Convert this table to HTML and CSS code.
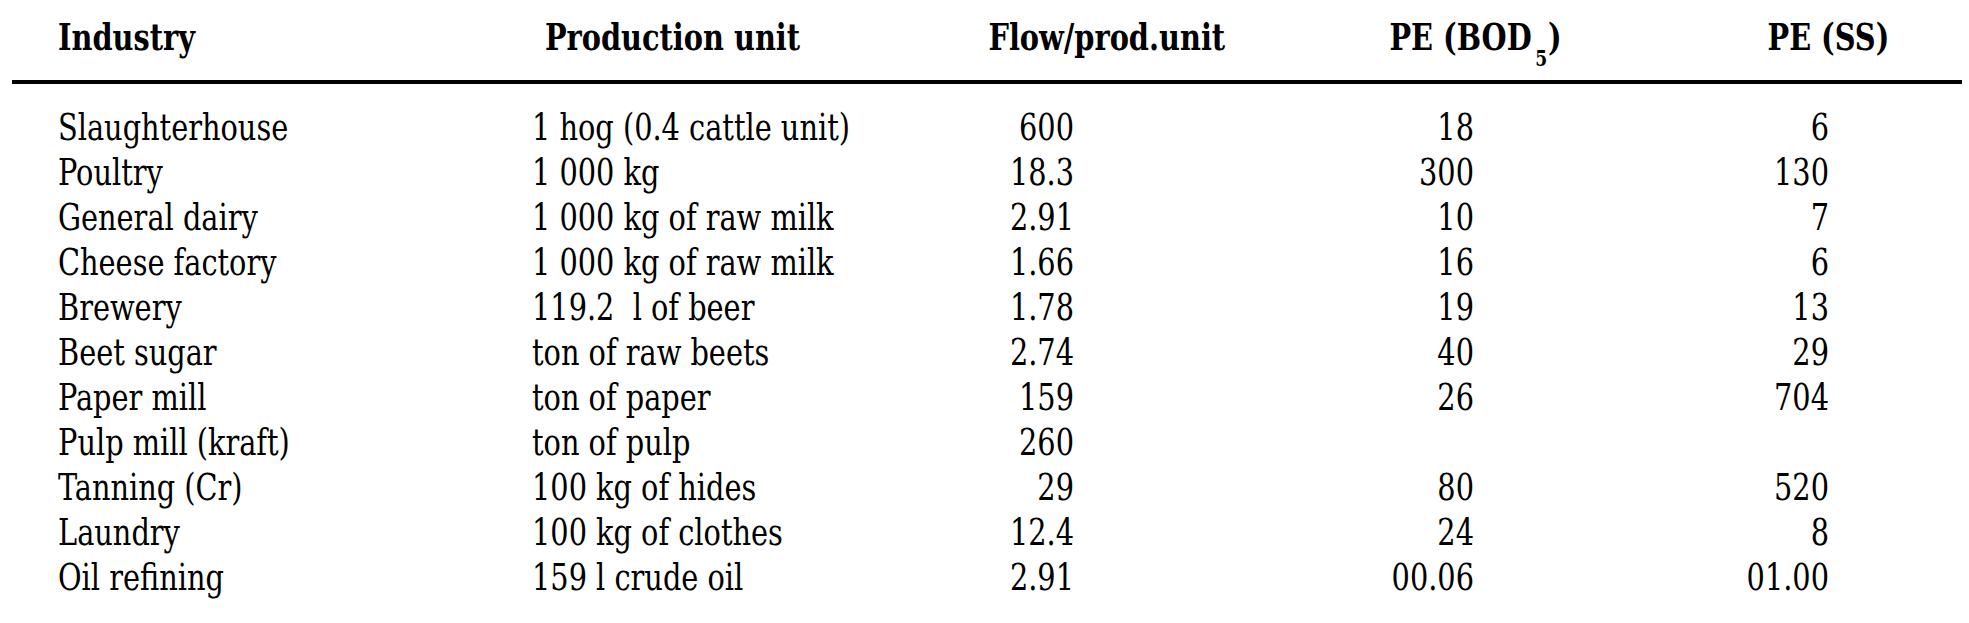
FILE: index.html
```html
<!DOCTYPE html>
<html lang="en">
<head>
<meta charset="utf-8">
<title>Industrial wastewater population equivalents</title>
<link rel="stylesheet" href="styles.css">
</head>
<body>
<div class="sheet">
  <div class="head">
    <div class="h h-ind"><span class="ht">Industry</span></div>
    <div class="h h-unit"><span class="ht">Production unit</span></div>
    <div class="h h-flow"><span class="ht">Flow/prod.unit</span></div>
    <div class="h h-bod"><span class="ht">PE (BOD<span class="sub">5</span>)</span></div>
    <div class="h h-ss"><span class="ht">PE (SS)</span></div>
  </div>
  <div class="rule"></div>
  <div class="rows">
    <div class="row"><span class="c c1">Slaughterhouse</span><span class="c c2">1 hog (0.4 cattle unit)</span><span class="c c3">600</span><span class="c c4">18</span><span class="c c5">6</span></div>
    <div class="row"><span class="c c1">Poultry</span><span class="c c2">1 000 kg</span><span class="c c3">18.3</span><span class="c c4">300</span><span class="c c5">130</span></div>
    <div class="row"><span class="c c1">General dairy</span><span class="c c2">1 000 kg of raw milk</span><span class="c c3">2.91</span><span class="c c4">10</span><span class="c c5">7</span></div>
    <div class="row"><span class="c c1">Cheese factory</span><span class="c c2">1 000 kg of raw milk</span><span class="c c3">1.66</span><span class="c c4">16</span><span class="c c5">6</span></div>
    <div class="row"><span class="c c1">Brewery</span><span class="c c2">119.2  l of beer</span><span class="c c3">1.78</span><span class="c c4">19</span><span class="c c5">13</span></div>
    <div class="row"><span class="c c1">Beet sugar</span><span class="c c2">ton of raw beets</span><span class="c c3">2.74</span><span class="c c4">40</span><span class="c c5">29</span></div>
    <div class="row"><span class="c c1">Paper mill</span><span class="c c2">ton of paper</span><span class="c c3">159</span><span class="c c4">26</span><span class="c c5">704</span></div>
    <div class="row"><span class="c c1">Pulp mill (kraft)</span><span class="c c2">ton of pulp</span><span class="c c3">260</span><span class="c c4"></span><span class="c c5"></span></div>
    <div class="row"><span class="c c1">Tanning (Cr)</span><span class="c c2">100 kg of hides</span><span class="c c3">29</span><span class="c c4">80</span><span class="c c5">520</span></div>
    <div class="row"><span class="c c1">Laundry</span><span class="c c2">100 kg of clothes</span><span class="c c3">12.4</span><span class="c c4">24</span><span class="c c5">8</span></div>
    <div class="row"><span class="c c1">Oil refining</span><span class="c c2">159 l crude oil</span><span class="c c3">2.91</span><span class="c c4">00.06</span><span class="c c5">01.00</span></div>
  </div>
</div>
</body>
</html>
```
FILE: styles.css
```css
html, body {
  margin: 0;
  padding: 0;
  background: #ffffff;
  overflow: hidden;
}

.sheet {
  padding-top: 15px;
  font-family: "DejaVu Serif Condensed", "DejaVu Serif", serif;
  font-size: 37px;
  line-height: 45px;
  color: #000000;
}

/* header row */
.head {
  display: grid;
  grid-template-columns: 426px 376px 493px 244px 131px 200px;
  padding-left: 58px;
  height: 45px;
  font-weight: bold;
}

.h {
  display: flex;
  justify-content: center;
}

.h-ind {
  justify-content: flex-start;
}

.h-ss {
  grid-column: 6;
}

.ht {
  display: inline-block;
  white-space: nowrap;
  transform: scaleX(0.865);
  transform-origin: 50% 50%;
}

.h-ind .ht {
  transform-origin: 0 50%;
}

.sub {
  font-size: 22px;
  line-height: 0;
  vertical-align: -16px;
  margin-left: 4px;
  margin-right: 1px;
}

/* heavy rule under the header */
.rule {
  margin: 20px 0 0 12px;
  width: 1950px;
  height: 4px;
  background: #000000;
}

/* body rows */
.rows {
  padding-top: 21px;
  padding-left: 58px;
}

.row {
  display: grid;
  grid-template-columns: 474px 333px 209px 400px 355px;
  height: 45px;
}

.c {
  white-space: pre;
  transform: scaleX(0.865);
  transform-origin: 0 50%;
}

.c3, .c4, .c5 {
  text-align: right;
  transform-origin: 100% 50%;
}
```
